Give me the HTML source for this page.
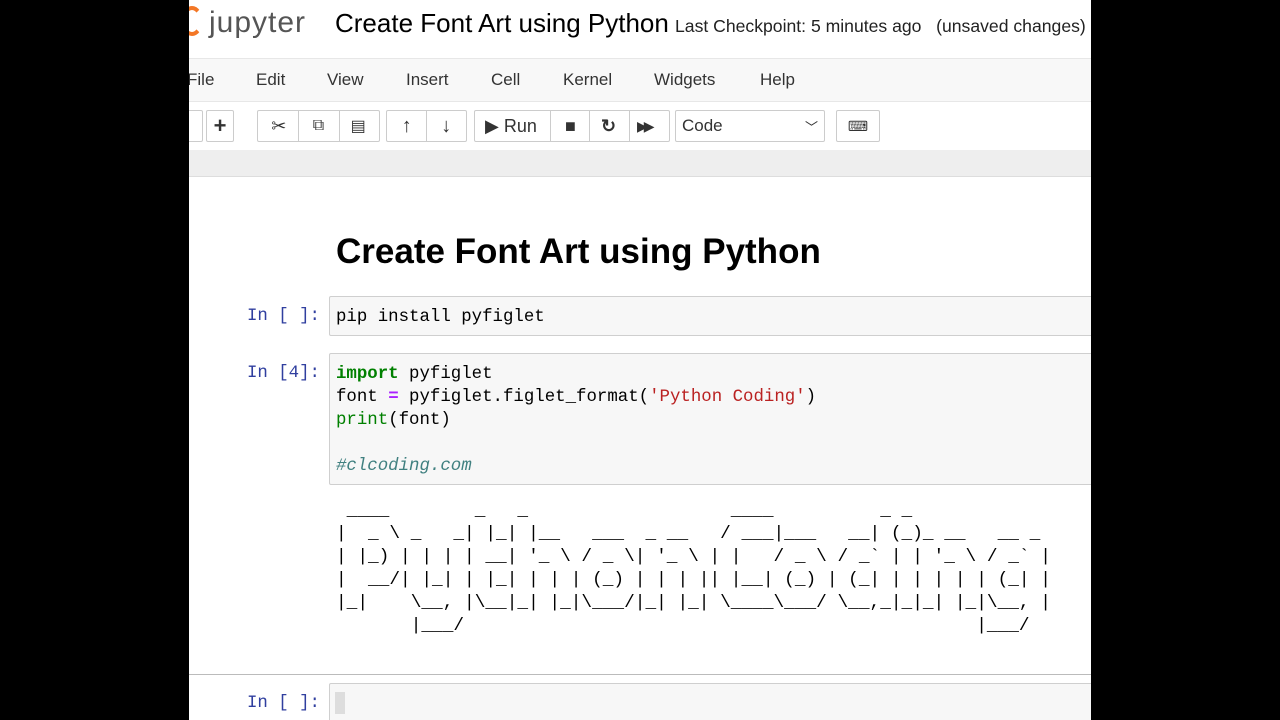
<!DOCTYPE html>
<html><head><meta charset="utf-8"><style>
*{margin:0;padding:0;box-sizing:border-box}
body{width:1280px;height:720px;background:#000;position:relative;overflow:hidden;font-family:"Liberation Sans",sans-serif}
#pg{position:absolute;left:189px;top:0;width:902px;height:720px;background:#fff;overflow:hidden}
.a{position:absolute}
.mono{font-family:"Liberation Mono",monospace;font-size:17.4px;line-height:23px;white-space:pre}
.btn{position:absolute;top:110px;height:32px;border:1px solid #ccc;border-radius:2px;background:#fff;display:flex;align-items:center;justify-content:center;color:#333;font-size:18px}
.sep{position:absolute;top:110px;width:1px;height:32px;background:#ccc}
.menu span{position:absolute;top:70px;font-size:17px;color:#333}
.prompt{position:absolute;right:771px;color:#303f9f;font-family:"Liberation Mono",monospace;font-size:17.4px;white-space:pre}
.inp{position:absolute;left:140px;width:800px;background:#f7f7f7;border:1px solid #cfcfcf;border-radius:2px}
</style></head><body>
<div id="pg">
 <div class="a" style="left:-8px;top:6px;width:22px;height:30px;border:4px solid #f37726;border-right-color:transparent;border-radius:50%"></div>
 <div class="a" style="left:20px;top:6px;font-size:30px;color:#555;letter-spacing:1px">jupyter</div>
 <div class="a" style="left:146px;top:8px;font-size:26px;color:#000">Create Font Art using Python</div>
 <div class="a" style="left:486px;top:16px;font-size:17.6px;color:#222">Last Checkpoint: 5 minutes ago &nbsp;&nbsp;(unsaved changes)</div>
 <div class="a" style="left:0;top:58px;width:902px;height:44px;background:#f8f8f8;border-top:1px solid #e7e7e7;border-bottom:1px solid #e7e7e7"></div>
 <div class="menu"><span style="left:-2px">File</span><span style="left:67px">Edit</span><span style="left:138px">View</span><span style="left:217px">Insert</span><span style="left:302px">Cell</span><span style="left:374px">Kernel</span><span style="left:465px">Widgets</span><span style="left:571px">Help</span></div>
 <div class="btn" style="left:-10px;width:24px"></div>
 <div class="btn" style="left:17px;width:28px;font-weight:bold;font-size:22px">+</div>
 <div class="btn" style="left:68px;width:123px;justify-content:space-around"><span>✂</span><span style="font-size:16px">⧉</span><span style="font-size:16px">▤</span></div>
 <div class="sep" style="left:109px"></div><div class="sep" style="left:150px"></div>
 <div class="btn" style="left:197px;width:81px;justify-content:space-around;font-weight:bold;font-size:20px"><span>↑</span><span>↓</span></div>
 <div class="sep" style="left:237px"></div>
 <div class="btn" style="left:285px;width:196px;justify-content:flex-start;font-size:18px"><span style="margin-left:10px">▶ Run</span><span style="position:absolute;left:90px">■</span><span style="position:absolute;left:126px;font-weight:bold">↻</span><span style="position:absolute;left:162px;font-size:14px;letter-spacing:-4px">▶▶</span></div>
 <div class="sep" style="left:361px"></div><div class="sep" style="left:400px"></div><div class="sep" style="left:440px"></div>
 <div class="btn" style="left:486px;width:150px;justify-content:space-between;padding:0 6px;font-size:17px;color:#333"><span>Code</span><span style="font-size:13px">﹀</span></div>
 <div class="btn" style="left:647px;width:44px;font-size:14px">⌨</div>
 <div class="a" style="left:0;top:150px;width:902px;height:27px;background:#eee;border-bottom:1px solid #ddd"></div>
 <div class="a" style="left:147px;top:232px;font-size:35px;font-weight:bold;color:#000">Create Font Art using Python</div>
 <div class="prompt" style="top:307px">In [ ]:</div>
 <div class="inp" style="top:296px;height:40px"></div>
 <div class="a mono" style="left:147px;top:306px;color:#000">pip install pyfiglet</div>
 <div class="prompt" style="top:364px">In [4]:</div>
 <div class="inp" style="top:353px;height:132px"></div>
 <div class="a mono" style="left:147px;top:363px;color:#000"><b style="color:#008000">import</b> pyfiglet
font <b style="color:#aa22ff">=</b> pyfiglet.figlet_format(<span style="color:#ba2121">'Python Coding'</span>)
<span style="color:#008000">print</span>(font)

<i style="color:#408080">#clcoding.com</i></div>
 <div class="a mono" style="left:147px;top:500px;color:#000;font-size:17.8px"> ____        _   _                   ____          _ _             
|  _ \ _   _| |_| |__   ___  _ __   / ___|___   __| (_)_ __   __ _ 
| |_) | | | | __| '_ \ / _ \| '_ \ | |   / _ \ / _` | | '_ \ / _` |
|  __/| |_| | |_| | | | (_) | | | || |__| (_) | (_| | | | | | (_| |
|_|    \__, |\__|_| |_|\___/|_| |_| \____\___/ \__,_|_|_| |_|\__, |
       |___/                                                |___/ </div>
 <div class="a" style="left:0;top:674px;width:902px;height:1px;background:#bbb"></div>
 <div class="prompt" style="top:694px">In [ ]:</div>
 <div class="inp" style="top:683px;height:50px"></div>
 <div class="a" style="left:146px;top:692px;width:10px;height:22px;background:#ddd"></div>
</div>
</body></html>
